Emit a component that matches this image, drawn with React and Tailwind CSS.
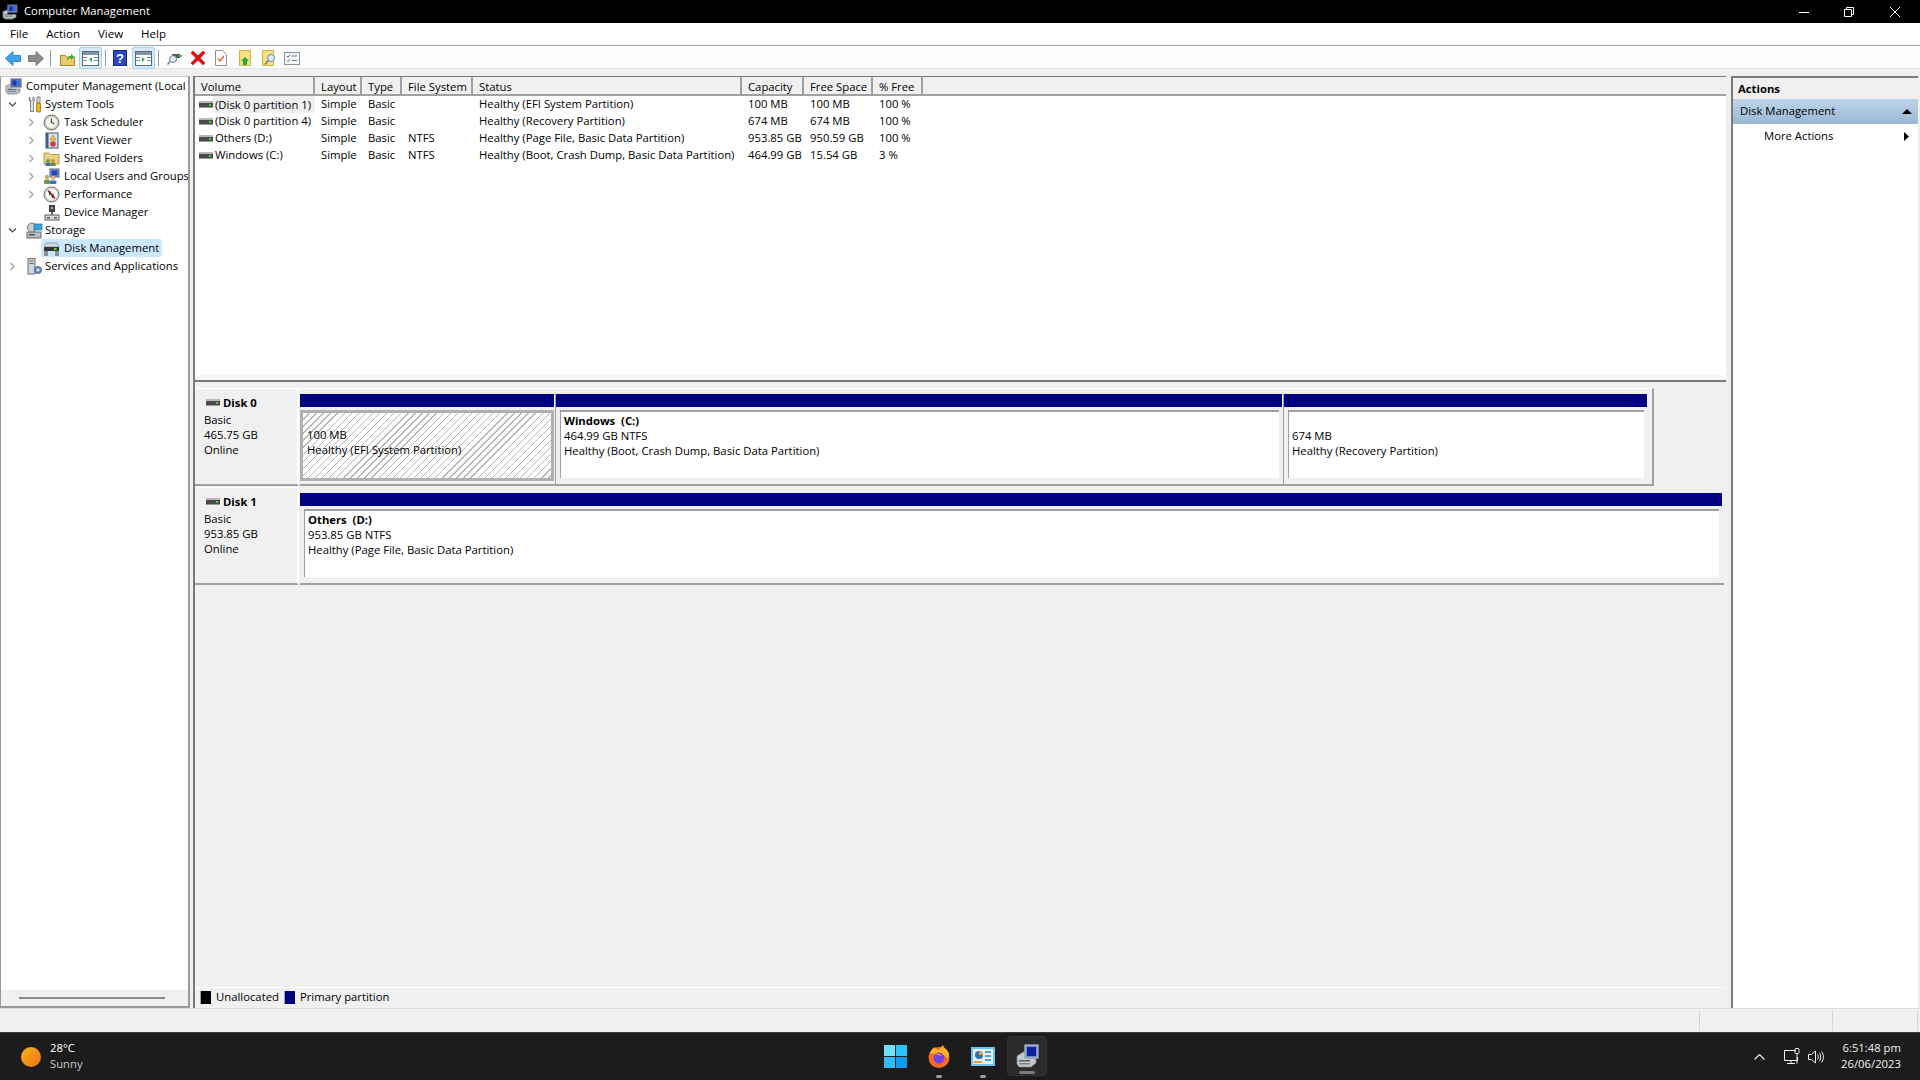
const columns = [
  { label: "Volume", w: "w-[120px]" },
  { label: "Layout", w: "w-[47px]" },
  { label: "Type", w: "w-[40px]" },
  { label: "File System", w: "w-[71px]" },
  { label: "Status", w: "w-[269px]" },
  { label: "Capacity", w: "w-[62px]" },
  { label: "Free Space", w: "w-[69px]" },
  { label: "% Free", w: "w-[50px]" },
];

const volumes = [
  ["(Disk 0 partition 1)", "Simple", "Basic", "", "Healthy (EFI System Partition)", "100 MB", "100 MB", "100 %"],
  ["(Disk 0 partition 4)", "Simple", "Basic", "", "Healthy (Recovery Partition)", "674 MB", "674 MB", "100 %"],
  ["Others (D:)", "Simple", "Basic", "NTFS", "Healthy (Page File, Basic Data Partition)", "953.85 GB", "950.59 GB", "100 %"],
  ["Windows (C:)", "Simple", "Basic", "NTFS", "Healthy (Boot, Crash Dump, Basic Data Partition)", "464.99 GB", "15.54 GB", "3 %"],
];

function Drive({ className = "" }) {
  return (
    <svg width="14" height="7" viewBox="0 0 14 7" className={className}>
      <rect x="0" y="0" width="14" height="2" fill="#b8b8b8" />
      <rect x="0" y="2" width="14" height="4" fill="#4a4a4a" />
      <rect x="10" y="3" width="2" height="2" fill="#3fd24a" />
      <rect x="0" y="6" width="14" height="1" fill="#9a9a9a" />
    </svg>
  );
}

function Computer({ size = 17 }) {
  return (
    <svg width={size} height={size} viewBox="0 0 17 17">
      <rect x="6" y="1" width="10" height="8" fill="#6f86b5" stroke="#4a5a78" />
      <rect x="7.500" y="2.500" width="4" height="5" fill="#1a2fb0" />
      <rect x="11.500" y="2.500" width="3" height="5" fill="#2a6ee0" />
      <path d="M1 8l5-2v5l9 0v3l-4 2H3l-2-2z" fill="#b9c2c6" stroke="#6a7478" strokeWidth=".7" />
      <rect x="3" y="11" width="8" height="1" fill="#55606a" />
      <rect x="3" y="13" width="8" height="1" fill="#7b868d" />
    </svg>
  );
}

function Tools() {
  return (
    <svg width="16" height="17" viewBox="0 0 16 17">
      <path d="M3 1v3l1.500 1L6 4V1c2 1 2 4 .5 5v9.500h-3V6C2 5 1.500 2.500 3 1z" fill="#e4e4e4" stroke="#666" strokeWidth=".8" />
      <rect x="10" y="1" width="3" height="6" fill="#dfe3e6" stroke="#555" strokeWidth=".7" />
      <rect x="9.500" y="7" width="4" height="9" rx="1" fill="#f2b40c" stroke="#8a6200" strokeWidth=".7" />
    </svg>
  );
}

function Clock() {
  return (
    <svg width="17" height="17" viewBox="0 0 17 17">
      <circle cx="8.500" cy="8.500" r="7.500" fill="#c9c9c2" stroke="#6f6f66" />
      <circle cx="8.500" cy="8.500" r="5.500" fill="#f7f6ec" />
      <path d="M8.500 4.500v4l3 1.500" fill="none" stroke="#444" strokeWidth="1.200" />
    </svg>
  );
}

function EventLog() {
  return (
    <svg width="16" height="17" viewBox="0 0 16 17">
      <rect x="2" y="1" width="12" height="15" fill="#dbe4ee" stroke="#3f5878" />
      <rect x="2" y="1" width="2.500" height="15" fill="#3f5f8f" />
      <path d="M9 3l3 5H6z" fill="#f1c232" stroke="#9a7a10" strokeWidth=".5" />
      <circle cx="9" cy="12" r="2.800" fill="#d23a3a" />
    </svg>
  );
}

function SharedFolder() {
  return (
    <svg width="17" height="17" viewBox="0 0 17 17">
      <path d="M1 3h5l1.500 1.500H16V14H1z" fill="#eccf7c" stroke="#a8893a" strokeWidth=".8" />
      <circle cx="5" cy="11" r="2" fill="#6a9a4a" />
      <rect x="2.500" y="13" width="5" height="3" fill="#3d6f9f" />
      <circle cx="10" cy="11" r="2" fill="#c78f5a" />
      <rect x="7.500" y="13" width="5" height="3" fill="#5d8f3f" />
    </svg>
  );
}

function Users() {
  return (
    <svg width="17" height="17" viewBox="0 0 17 17">
      <rect x="7" y="1" width="9" height="8" fill="#8fa6cc" stroke="#4d638a" />
      <rect x="8.500" y="2.500" width="6" height="5" fill="#2542b8" />
      <circle cx="4" cy="9" r="2.200" fill="#d6a46e" />
      <rect x="1" y="11.500" width="6" height="4.500" rx="1.500" fill="#6a9c3f" />
      <circle cx="10" cy="10" r="2.200" fill="#e3b788" />
      <rect x="6.500" y="12.500" width="7" height="3.500" rx="1.500" fill="#3d72b0" />
    </svg>
  );
}

function Gauge() {
  return (
    <svg width="17" height="17" viewBox="0 0 17 17">
      <circle cx="8.500" cy="8.500" r="7.500" fill="#d8d8d0" stroke="#6c6c64" />
      <circle cx="8.500" cy="8.500" r="5.500" fill="#fff" />
      <path d="M5 4.500l7 8" stroke="#d22" strokeWidth="1.800" />
      <path d="M6.500 9.500V5l3.500 7V7.500" fill="none" stroke="#222" strokeWidth=".8" />
    </svg>
  );
}

function DeviceManager() {
  return (
    <svg width="16" height="17" viewBox="0 0 16 17">
      <rect x="5" y="1" width="6" height="7" fill="#3a3f45" />
      <rect x="7" y="3" width="2" height="2" fill="#8adf6a" />
      <path d="M7 8h2v3H7z" fill="#666" />
      <rect x="1" y="11" width="14" height="5" fill="#d9dcdf" stroke="#5a5f64" />
      <rect x="3" y="13" width="3" height="1.500" fill="#555" />
      <rect x="10" y="13" width="3" height="1.500" fill="#555" />
    </svg>
  );
}

function Storage() {
  return (
    <svg width="17" height="17" viewBox="0 0 17 17">
      <rect x="1" y="10" width="14" height="6" fill="#bcc1c4" stroke="#62686c" />
      <rect x="3" y="12" width="6" height="1.500" fill="#4b5054" />
      <circle cx="6" cy="5.500" r="4.500" fill="#c7cfd3" stroke="#6e767a" />
      <rect x="8" y="2" width="8" height="6" fill="#38a3d8" stroke="#2a6f9a" strokeWidth=".7" />
    </svg>
  );
}

function DiskMgmt() {
  return (
    <svg width="17" height="17" viewBox="0 0 17 17">
      <path d="M3 3h11l2 4H1z" fill="#d7dadc" stroke="#777" strokeWidth=".6" />
      <rect x="1" y="7" width="15" height="4" fill="#33373a" />
      <rect x="11" y="8" width="2.500" height="2" fill="#58d65a" />
      <path d="M1 11h4v5H1zM12 11h4v5h-4z" fill="#8b8f92" />
    </svg>
  );
}

function Services() {
  return (
    <svg width="16" height="17" viewBox="0 0 16 17">
      <rect x="1" y="0.500" width="7" height="15.500" fill="#cfd6dc" stroke="#687078" />
      <rect x="2.500" y="2.500" width="4" height="1" fill="#596068" />
      <rect x="2.500" y="5" width="4" height="1" fill="#596068" />
      <circle cx="11" cy="12" r="3.500" fill="#6d98c8" stroke="#44688f" />
      <circle cx="11" cy="12" r="1.200" fill="#fff" />
    </svg>
  );
}

function Chevron({ open }) {
  return (
    <svg width="9" height="9" viewBox="0 0 9 9" className="shrink-0">
      {open ? (
        <path d="M1 2.500l3.500 3.500L8 2.500" fill="none" stroke="#444" strokeWidth="1.200" />
      ) : (
        <path d="M2.500 1L6 4.500 2.500 8" fill="none" stroke="#a0a0a0" strokeWidth="1.200" />
      )}
    </svg>
  );
}

function TreeRow({ level, chevron, open, icon, text, selected }) {
  const inner = (
    <>
      <span className="w-[17px] h-[17px] flex items-center justify-center shrink-0">{icon}</span>
      <span className={`${level === 1 ? "ml-[2px]" : "ml-[4px]"} whitespace-nowrap`}>{text}</span>
    </>
  );
  return (
    <div className="h-[18px] flex items-center overflow-hidden">
      <div className={level === 0 ? "w-[4px] shrink-0" : level === 1 ? "w-[25px] shrink-0 flex items-center pl-[7px]" : "w-[42px] shrink-0 flex items-center pl-[26px]"}>
        {chevron && <Chevron open={open} />}
      </div>
      {selected ? (
        <div className="flex items-center h-[18px] -ml-[2px] pl-[2px] pr-[3px] bg-[#cce8ff] rounded-[2px]">{inner}</div>
      ) : (
        inner
      )}
    </div>
  );
}

function ToolButton({ children, active }) {
  return (
    <div className={active ? "w-[23px] h-[22px] flex items-center justify-center rounded-[2px] bg-[#d5e9f8] border border-[#a4d3f3]" : "h-[22px] flex items-center justify-center"}>
      {children}
    </div>
  );
}

function Sep() {
  return <div className="w-px h-[16px] bg-[#9a9a9a]" />;
}

function PaneIcon({ side }) {
  return (
    <svg width="17" height="15" viewBox="0 0 17 15">
      <rect x=".5" y=".5" width="16" height="14" fill="#fff" stroke="#5a6a78" />
      <rect x="1" y="1" width="15" height="3" fill="#7f95a8" />
      <rect x="1" y="6" width="4" height="1" fill="#78909c" />
      <rect x="1" y="9" width="4" height="1" fill="#78909c" />
      <rect x="12" y="6" width="4" height="1" fill="#78909c" />
      <rect x="12" y="9" width="4" height="1" fill="#78909c" />
      <path d={side === "left" ? "M10 6v5L7 8.500z" : "M7 6v5l3-2.500z"} fill="#2fae3f" />
    </svg>
  );
}

function Toolbar() {
  return (
    <div className="h-[23px] flex items-center bg-[#fdfdfd] border-b border-[#e2e2e2] pl-[5px] pt-[2px] shrink-0">
      <svg width="16" height="15" viewBox="0 0 16 15">
        <path d="M8 .5L.5 7.500 8 14.500V10.500h7.500v-6H8z" fill="#3fa4ea" stroke="#1f78bd" strokeWidth=".8" />
      </svg>
      <svg width="16" height="15" viewBox="0 0 16 15" className="ml-[7px]">
        <path d="M8 .5l7.500 7-7.500 7V10.500H.5v-6H8z" fill="#8c8c8c" stroke="#6a6a6a" strokeWidth=".8" />
      </svg>
      <div className="ml-[6px]"><Sep /></div>
      <svg width="15" height="15" viewBox="0 0 15 15" className="ml-[9px]">
        <path d="M.5 4.500h5l1 1.500h8v8.500H.5z" fill="#eccb6a" stroke="#a58632" />
        <path d="M7 10c0-4 2-5 4-5V2.500L14 6l-3 3V7c-2 0-3 1-4 3z" fill="#3ca53e" />
      </svg>
      <div className="ml-[4px]"><ToolButton active><PaneIcon side="left" /></ToolButton></div>
      <div className="ml-[3px]"><Sep /></div>
      <svg width="14" height="16" viewBox="0 0 14 16" className="ml-[7px]">
        <rect x=".5" y=".5" width="13" height="15" fill="#2d46c4" stroke="#17297e" />
        <text x="7" y="13" textAnchor="middle" fontSize="13" fontWeight="700" fill="#fff" fontFamily="Liberation Sans">?</text>
      </svg>
      <div className="ml-[5px]"><ToolButton active><PaneIcon side="right" /></ToolButton></div>
      <div className="ml-[3px]"><Sep /></div>
      <svg width="16" height="13" viewBox="0 0 16 13" className="ml-[8px]">
        <rect x="5" y="2" width="8" height="4" fill="#555" />
        <rect x="12" y="3" width="3" height="2" fill="#43c24a" />
        <circle cx="6" cy="7" r="3.500" fill="#dfe8ef" stroke="#6c7a86" />
        <path d="M3 9.500L.5 12.500" stroke="#6c7a86" strokeWidth="1.500" />
      </svg>
      <svg width="14" height="14" viewBox="0 0 14 14" className="ml-[8px]">
        <path d="M2 2l10 10M12 2L2 12" stroke="#e00f16" strokeWidth="3.400" strokeLinecap="square" />
      </svg>
      <svg width="12" height="16" viewBox="0 0 12 16" className="ml-[10px]">
        <path d="M.5.500h7l4 4v11H.5z" fill="#fff" stroke="#8f8f8f" />
        <path d="M3 8.500l2 2.500 4-5" fill="none" stroke="#e2592a" strokeWidth="1.300" />
      </svg>
      <svg width="12" height="16" viewBox="0 0 12 16" className="ml-[12px]">
        <path d="M.5.500h11v15H.5z" fill="#f7e07e" stroke="#cdb54b" />
        <path d="M6 7l4 4H8v4H4v-4H2z" fill="#2ea83a" />
      </svg>
      <svg width="14" height="16" viewBox="0 0 14 16" className="ml-[11px]">
        <path d="M.5.500h11v15H.5z" fill="#f7e07e" stroke="#cdb54b" />
        <circle cx="9" cy="8" r="3.500" fill="#d8ecfa" stroke="#6a8ca6" />
        <path d="M6.500 10.500L3 14.500" stroke="#7a7a7a" strokeWidth="1.500" />
      </svg>
      <svg width="16" height="13" viewBox="0 0 16 13" className="ml-[8px]">
        <rect x=".5" y=".5" width="15" height="12" fill="#f5f8fb" stroke="#8595a3" />
        <path d="M3 4l1 1 2-2M3 8.500l1 1 2-2" fill="none" stroke="#4a6a86" />
        <path d="M8 4h5M8 8.500h5" stroke="#6b7f90" />
      </svg>
    </div>
  );
}

function Partition({ width, selected, name, size, status, last }) {
  return (
    <div className={`${width} shrink-0 flex flex-col ${last ? "" : "border-r border-[#a0a0a0] pr-px"}`}>
      <div className="h-[13px] bg-[#000080] shrink-0" />
      {selected ? (
        <div className="mt-[3px] h-[71px] border-[3px] border-[#b0b0b0] pl-[4px] bg-[repeating-linear-gradient(135deg,#fff_0,#fff_4px,#b4b4b4_4px,#b4b4b4_5px)]">
          <div className="h-[15px]" />
          <div className="leading-[15px] -mt-px">{size}</div>
          <div className="leading-[15px]">{status}</div>
        </div>
      ) : (
        <div className="mt-[3px] ml-[4px] mr-[3px] h-[68px] bg-white border-t-2 border-l border-[#a0a0a0] pl-[3px]">
          <div className="h-[15px] leading-[15px] mt-[1px] font-bold whitespace-pre">{name}</div>
          <div className="leading-[15px]">{size}</div>
          <div className="leading-[15px]">{status}</div>
        </div>
      )}
    </div>
  );
}

function DiskLabel({ name, size }) {
  return (
    <div className="w-[104px] h-[98px] shrink-0 bg-[#f0f0f0] border-r-2 border-t border-r-white border-t-white border-b-2 border-b-[#a0a0a0] pl-[9px] pt-[8px]">
      <div className="flex items-center h-[15px] font-bold -mt-px ml-[2px]">
        <Drive className="mr-[2px] -mt-[3px]" />
        <span className="ml-px">{name}</span>
      </div>
      <div className="leading-[15px] mt-[1px]">Basic</div>
      <div className="leading-[15px]">{size}</div>
      <div className="leading-[15px]">Online</div>
    </div>
  );
}

function VolumeList() {
  return (
    <div className="h-[298px] bg-white flex flex-col shrink-0">
      <div className="h-[19px] flex bg-[#f0f0f0] border-b-2 border-[#a0a0a0] shrink-0">
        {columns.map((c) => (
          <div key={c.label} className={`${c.w} pl-[6px] leading-[17px] pt-px border-r-2 border-[#a0a0a0] whitespace-nowrap shrink-0`}>
            {c.label}
          </div>
        ))}
      </div>
      <div>
        {volumes.map((row, i) => (
          <div key={row[0]} className="h-[17px] flex items-center">
            {row.map((cell, j) => (
              <div key={j} className={`${columns[j].w} ${j === 0 ? "pl-[4px]" : "pl-[6px]"} whitespace-nowrap shrink-0 flex items-center h-[17px]`}>
                {j === 0 ? (
                  <>
                    <Drive className="shrink-0" />
                    <span className={i === 0 ? "bg-[#f0f0f0] pl-[2px] pr-[4px] leading-[17px]" : "pl-[2px]"}>{cell}</span>
                  </>
                ) : (
                  cell
                )}
              </div>
            ))}
          </div>
        ))}
      </div>
    </div>
  );
}

function DiskView() {
  return (
    <div className="flex-1 bg-[#f0f0f0] flex flex-col min-h-0">
      <div className="h-[5px] bg-[#f7f7f7] shrink-0" />
      <div className="h-[2px] bg-[#7a7a7a] shrink-0 mb-[6px]" />
      <div className="flex h-[98px] shrink-0">
        <DiskLabel name="Disk 0" size="465.75 GB" />
        <div className="w-[1354px] h-[98px] ml-[1px] pt-[5px] pr-[4px] border-r-2 border-b-2 border-[#a0a0a0] border-t border-t-white flex">
          <Partition width="w-[256px]" selected size="100 MB" status="Healthy (EFI System Partition)" />
          <Partition width="w-[728px]" name="Windows  (C:)" size="464.99 GB NTFS" status="Healthy (Boot, Crash Dump, Basic Data Partition)" />
          <Partition width="w-[363px]" last name="" size="674 MB" status="Healthy (Recovery Partition)" />
        </div>
      </div>
      <div className="flex h-[98px] shrink-0 mt-px">
        <DiskLabel name="Disk 1" size="953.85 GB" />
        <div className="flex-1 h-[98px] ml-[1px] pt-[6px] border-b-2 border-[#a0a0a0] flex mr-[2px]">
          <Partition width="w-[1422px]" last name="Others  (D:)" size="953.85 GB NTFS" status="Healthy (Page File, Basic Data Partition)" />
        </div>
      </div>
      <div className="flex-1" />
      <div className="h-[21px] flex items-center pl-[5px] pb-[2px] border-t border-white shrink-0">
        <div className="w-[11px] h-[13px] bg-black border-l border-[#a0a0a0]" />
        <span className="ml-[5px]">Unallocated</span>
        <div className="ml-[5px] w-[11px] h-[13px] bg-[#000080] border-l border-[#a0a0a0]" />
        <span className="ml-[5px]">Primary partition</span>
      </div>
    </div>
  );
}

function TreePane() {
  return (
    <div className="w-[190px] shrink-0 flex flex-col bg-white border-t border-l border-r-2 border-b-2 border-[#9a9a9a] border-t-[#c8c8c8]">
      <div className="flex-1">
        <TreeRow level={0} icon={<Computer />} text="Computer Management (Local" />
        <TreeRow level={1} chevron open icon={<Tools />} text="System Tools" />
        <TreeRow level={2} chevron icon={<Clock />} text="Task Scheduler" />
        <TreeRow level={2} chevron icon={<EventLog />} text="Event Viewer" />
        <TreeRow level={2} chevron icon={<SharedFolder />} text="Shared Folders" />
        <TreeRow level={2} chevron icon={<Users />} text="Local Users and Groups" />
        <TreeRow level={2} chevron icon={<Gauge />} text="Performance" />
        <TreeRow level={2} icon={<DeviceManager />} text="Device Manager" />
        <TreeRow level={1} chevron open icon={<Storage />} text="Storage" />
        <TreeRow level={2} selected icon={<DiskMgmt />} text="Disk Management" />
        <TreeRow level={1} chevron icon={<Services />} text="Services and Applications" />
      </div>
      <div className="h-[16px] bg-[#f0f0f0] flex items-center pl-[18px] shrink-0">
        <div className="w-[146px] h-[2px] bg-[#8a8a8a]" />
      </div>
    </div>
  );
}

function ActionsPane() {
  return (
    <div className="w-[187px] ml-[5px] shrink-0 bg-white border-t-2 border-l-2 border-[#7a7a7a] flex flex-col">
      <div className="h-[21px] bg-[#f0f0f0] pl-[5px] font-bold leading-[21px]">Actions</div>
      <div className="h-[25px] bg-gradient-to-b from-[#bdd4ea] to-[#9bb7d4] flex items-center justify-between pl-[7px] pr-[6px]">
        <span>Disk Management</span>
        <svg width="10" height="5" viewBox="0 0 10 5"><path d="M5 0l5 5H0z" fill="#000" /></svg>
      </div>
      <div className="h-[24px] flex items-center justify-between pl-[31px] pr-[9px]">
        <span>More Actions</span>
        <svg width="5" height="9" viewBox="0 0 5 9"><path d="M0 0l5 4.500L0 9z" fill="#000" /></svg>
      </div>
    </div>
  );
}

function Taskbar() {
  return (
    <div className="h-[48px] bg-[#1c1c1c] border-t border-[#3c3c3c] flex items-center text-white shrink-0">
      <div className="w-[200px] flex items-center pl-[21px]">
        <div className="w-[20px] h-[20px] rounded-full bg-gradient-to-br from-[#f4b61f] to-[#ee6c12]" />
        <div className="ml-[9px] leading-[16px] mb-[2px]">
          <div>28°C</div>
          <div className="text-[#c8c8c8]">Sunny</div>
        </div>
      </div>
      <div className="flex-1 flex items-center justify-center">
        <div className="flex items-center mt-[-1px]">
          <div className="w-[44px] flex justify-center">
            <svg width="23" height="23" viewBox="0 0 23 23">
              <rect width="11" height="11" fill="#6ce0ff" />
              <rect x="12" width="11" height="11" fill="#2cc3fb" />
              <rect y="12" width="11" height="11" fill="#2bbcf9" />
              <rect x="12" y="12" width="11" height="11" fill="#0f9af2" />
            </svg>
          </div>
          <div className="w-[44px] h-[40px] flex flex-col items-center justify-center relative">
            <svg width="24" height="24" viewBox="0 0 24 24">
              <circle cx="12" cy="13.500" r="10.500" fill="#f9691f" />
              <path d="M3 9c1-3 3-5 5-6 0 2 2 3 4 3 1-2 3-4 4-5 0 2 2 3 4 5 3 4 2 7 1 9-3-4-6-4-8-5-4-1-7 1-10-1z" fill="#ffb21f" />
              <circle cx="12" cy="14" r="5.500" fill="#7542e5" />
              <path d="M8 10c3-1 6 0 7 2-3-1-5-1-7-2z" fill="#ff8a24" />
            </svg>
            <div className="absolute bottom-[-2px] w-[6px] h-[3px] rounded-full bg-[#9a9a9a]" />
          </div>
          <div className="w-[44px] h-[40px] flex items-center justify-center relative">
            <svg width="24" height="19" viewBox="0 0 24 19">
              <rect width="24" height="19" fill="#6fc3e8" />
              <rect x="2" y="2" width="20" height="15" fill="#dff1fa" />
              <circle cx="8" cy="8" r="4" fill="#2f6fb2" />
              <path d="M8 8V4a4 4 0 0 1 4 4z" fill="#f19a2a" />
              <rect x="3" y="14" width="8" height="2" fill="#f19a2a" />
              <path d="M14 5h6M14 9h6M14 13h6" stroke="#3c7db8" strokeWidth="1.400" />
            </svg>
            <div className="absolute bottom-[-2px] w-[6px] h-[3px] rounded-full bg-[#9a9a9a]" />
          </div>
          <div className="w-[40px] h-[40px] ml-[2px] rounded-[4px] bg-[#2b2b2b] border border-[#333] flex items-center justify-center relative">
            <svg width="23" height="24" viewBox="0 0 23 24">
              <rect x="9" y="1" width="13" height="13" fill="#6f8fd0" stroke="#c8d4ea" />
              <rect x="11" y="3" width="9" height="9" fill="#10219e" />
              <path d="M1 12l8-5v7h11v5l-5 4H3l-2-3z" fill="#bfc9ce" stroke="#7b8589" strokeWidth=".7" />
              <rect x="3" y="16" width="11" height="1.500" fill="#55606a" />
              <rect x="3" y="19" width="11" height="1.500" fill="#7b868d" />
            </svg>
            <div className="absolute bottom-[1px] w-[16px] h-[3px] rounded-full bg-[#7c7c7c]" />
          </div>
        </div>
      </div>
      <div className="w-[200px] flex items-center justify-end pr-[19px]">
        <svg width="11" height="6" viewBox="0 0 11 6" className="mr-[19px]">
          <path d="M.5 5.500l5-5 5 5" fill="none" stroke="#f2f2f2" strokeWidth="1.100" />
        </svg>
        <svg width="17" height="17" viewBox="0 0 17 17" className="mr-[7px]">
          <path d="M12 2.500H.5v10h13V9M7 12.500v3M3 15.500h8" fill="none" stroke="#f2f2f2" />
          <rect x="11" y=".5" width="4" height="5" rx="1" fill="none" stroke="#f2f2f2" />
          <path d="M13 5.500v10" stroke="#f2f2f2" />
        </svg>
        <svg width="17" height="14" viewBox="0 0 17 14" className="mr-[16px]">
          <path d="M.5 4.500h3L7.500 1v12l-4-3.500h-3z" fill="none" stroke="#f2f2f2" />
          <path d="M9.500 4.500c1 1.500 1 3.500 0 5M11.500 3c1.500 2 1.500 6 0 8M13.500 1.500c2.500 3 2.500 8 0 11" fill="none" stroke="#f2f2f2" />
        </svg>
        <div className="text-right leading-[16px] mb-[2px] text-[#f0f0f0] whitespace-nowrap">
          <div>6:51:48 pm</div>
          <div>26/06/2023</div>
        </div>
      </div>
    </div>
  );
}

export default function App() {
  return (
    <div className="w-[1920px] h-[1080px] overflow-hidden flex flex-col bg-[#f0f0f0] text-[11.3px] text-black font-['Open_Sans',sans-serif]">
      <div className="h-[23px] bg-black text-white flex items-center shrink-0">
        <div className="ml-[2px] w-[17px] flex"><Computer size={16} /></div>
        <span className="ml-[5px]">Computer Management</span>
        <div className="ml-auto flex items-center">
          <svg width="10" height="10" viewBox="0 0 10 10" className="mr-[35px]"><path d="M0 5.500h10" stroke="#fff" /></svg>
          <svg width="10" height="10" viewBox="0 0 10 10" className="mr-[36px]">
            <path d="M.5 2.500h7v7h-7zM2.500 2.500v-2h7v7h-2" fill="none" stroke="#fff" />
          </svg>
          <svg width="10" height="10" viewBox="0 0 10 10" className="mr-[20px]"><path d="M0 0l10 10M10 0L0 10" stroke="#fff" /></svg>
        </div>
      </div>
      <div className="h-[23px] bg-white border-b border-[#a0a0a0] flex items-center pl-[10px] gap-[18px] shrink-0 text-[11.5px]">
        <span>File</span>
        <span>Action</span>
        <span>View</span>
        <span>Help</span>
      </div>
      <Toolbar />
      <div className="flex-1 min-h-0 flex pt-[7px] bg-[#f0f0f0]">
        <TreePane />
        <div className="w-[1533px] ml-[3px] shrink-0 flex flex-col border-t border-l-2 border-[#7a7a7a] bg-[#f0f0f0]">
          <VolumeList />
          <DiskView />
        </div>
        <ActionsPane />
      </div>
      <div className="h-[24px] flex justify-end items-center bg-[#f0f0f0] border-t border-[#dcdcdc] shrink-0">
        <div className="w-px h-[20px] bg-[#d4d4d4] mr-[132px]" />
        <div className="w-px h-[20px] bg-[#d4d4d4] mr-[84px]" />
        <div className="w-px h-[20px] bg-[#d4d4d4] mr-[2px]" />
      </div>
      <Taskbar />
    </div>
  );
}
